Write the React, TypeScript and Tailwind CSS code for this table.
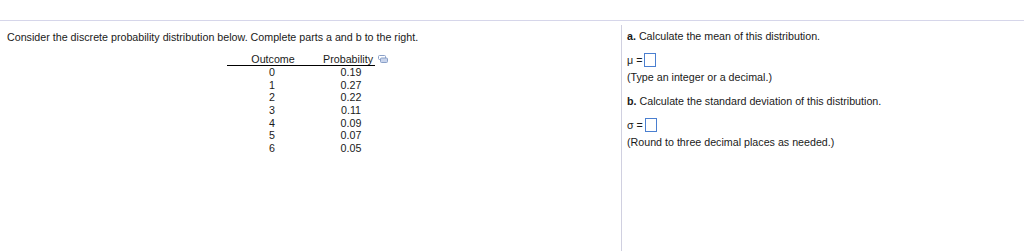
const rows = [
  ['0', '0.19'],
  ['1', '0.27'],
  ['2', '0.22'],
  ['3', '0.11'],
  ['4', '0.09'],
  ['5', '0.07'],
  ['6', '0.05'],
];

function PopupIcon() {
  return (
    <svg width="10" height="8" viewBox="0 0 10 8" className="ml-[3px] mb-[3px]">
      <rect x="0.5" y="0.5" width="7" height="4" rx="1" fill="none" stroke="#8aa0c8" />
      <rect x="2.5" y="3" width="7" height="4.5" rx="1" fill="#c8d4ec" stroke="#8aa0c8" />
    </svg>
  );
}

function AnswerBox() {
  return <span className="inline-block w-[12px] h-[14px] border border-[#4a7fd0] bg-white ml-[2px]" />;
}

export default function App() {
  return (
    <div className="w-[1024px] h-[251px] bg-white font-['Liberation_Sans',Arial,sans-serif] text-[10.7px] text-[#1a1a1a] overflow-hidden">
      <div className="h-[20px]" />
      <div className="flex h-[231px] border-t border-[#d6d6ea]">
        <div className="w-[621px] pl-[7px] pt-[10px]">
          <p className="leading-[13px]">
            Consider the discrete probability distribution below. Complete parts a and b to the right.
          </p>
          <div className="ml-[220px] mt-[9px]">
            <div className="flex items-end">
              <div className="w-[148px] flex border-b border-black leading-[12px]">
                <span className="w-[92px] text-center">Outcome</span>
                <span className="w-[54px] text-right">Probability</span>
              </div>
              <PopupIcon />
            </div>
            {rows.map(([o, p]) => (
              <div key={o} className="flex w-[158px] leading-[12.67px]">
                <span className="w-[90px] text-center">{o}</span>
                <span className="w-[68px] text-center">{p}</span>
              </div>
            ))}
          </div>
        </div>
        <div className="flex-1 border-l border-[#d0d0e0] mt-[4px] pl-[5px] pt-[5px]">
          <p className="leading-[13px]">
            <b>a.</b> Calculate the mean of this distribution.
          </p>
          <div className="mt-[9px] flex items-center">
            <span>μ =</span>
            <AnswerBox />
          </div>
          <p className="leading-[13px] mt-[3px]">(Type an integer or a decimal.)</p>
          <p className="leading-[13px] mt-[11px]">
            <b>b.</b> Calculate the standard deviation of this distribution.
          </p>
          <div className="mt-[9px] flex items-center">
            <span>σ =</span>
            <AnswerBox />
          </div>
          <p className="leading-[13px] mt-[3px]">(Round to three decimal places as needed.)</p>
        </div>
      </div>
    </div>
  );
}
